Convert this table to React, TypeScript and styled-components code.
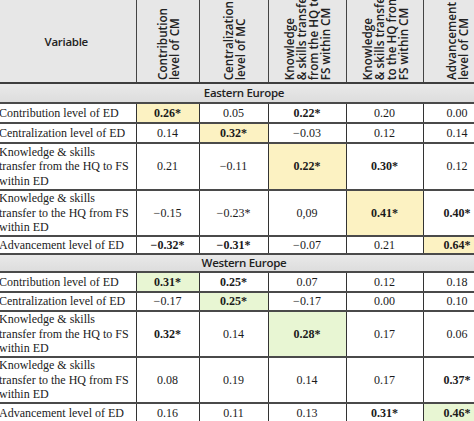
import React from 'react';
import styled, { createGlobalStyle } from 'styled-components';

type Tint = 'yellow' | 'green';

interface Value {
    v: string;
    b?: boolean;
    hl?: Tint;
}

interface DataRow {
    label: React.ReactNode;
    h: number;
    values: Value[];
}

interface Block {
    title: string;
    h: number;
    rows: DataRow[];
}

const columns = [
    ['Contribution', 'level of CM'],
    ['Centralization', 'level of MC'],
    ['Knowledge', '& skills transfer', 'from the HQ to', 'FS within CM'],
    ['Knowledge', '& skills transfer', 'to the HQ from', 'FS within CM'],
    ['Advancement', 'level of CM'],
];

const colWidths = [139, 63, 69, 78, 77, 68];

const fromHQ = (
    <>
        Knowledge &amp; skills
        <br />
        transfer from the HQ to FS
        <br />
        within ED
    </>
);

const toHQ = (
    <>
        Knowledge &amp; skills
        <br />
        transfer to the HQ from FS
        <br />
        within ED
    </>
);

const blocks: Block[] = [
    {
        title: 'Eastern Europe',
        h: 20,
        rows: [
            {
                label: 'Contribution level of ED',
                h: 20,
                values: [{ v: '0.26*', b: true, hl: 'yellow' }, { v: '0.05' }, { v: '0.22*', b: true }, { v: '0.20' }, { v: '0.00' }],
            },
            {
                label: 'Centralization level of ED',
                h: 20,
                values: [{ v: '0.14' }, { v: '0.32*', b: true, hl: 'yellow' }, { v: '\u22120.03' }, { v: '0.12' }, { v: '0.14' }],
            },
            {
                label: fromHQ,
                h: 47,
                values: [{ v: '0.21' }, { v: '\u22120.11' }, { v: '0.22*', b: true, hl: 'yellow' }, { v: '0.30*', b: true }, { v: '0.12' }],
            },
            {
                label: toHQ,
                h: 46,
                values: [{ v: '\u22120.15' }, { v: '\u22120.23*' }, { v: '0,09' }, { v: '0.41*', b: true, hl: 'yellow' }, { v: '0.40*', b: true }],
            },
            {
                label: 'Advancement level of ED',
                h: 18,
                values: [{ v: '\u22120.32*', b: true }, { v: '\u22120.31*', b: true }, { v: '\u22120.07' }, { v: '0.21' }, { v: '0.64*', b: true, hl: 'yellow' }],
            },
        ],
    },
    {
        title: 'Western Europe',
        h: 18,
        rows: [
            {
                label: 'Contribution level of ED',
                h: 20,
                values: [{ v: '0.31*', b: true, hl: 'green' }, { v: '0.25*', b: true }, { v: '0.07' }, { v: '0.12' }, { v: '0.18' }],
            },
            {
                label: 'Centralization level of ED',
                h: 19,
                values: [{ v: '\u22120.17' }, { v: '0.25*', b: true, hl: 'green' }, { v: '\u22120.17' }, { v: '0.00' }, { v: '0.10' }],
            },
            {
                label: fromHQ,
                h: 46,
                values: [{ v: '0.32*', b: true }, { v: '0.14' }, { v: '0.28*', b: true, hl: 'green' }, { v: '0.17' }, { v: '0.06' }],
            },
            {
                label: toHQ,
                h: 46,
                values: [{ v: '0.08' }, { v: '0.19' }, { v: '0.14' }, { v: '0.17' }, { v: '0.37*', b: true }],
            },
            {
                label: 'Advancement level of ED',
                h: 20,
                values: [{ v: '0.16' }, { v: '0.11' }, { v: '0.13' }, { v: '0.31*', b: true }, { v: '0.46*', b: true, hl: 'green' }],
            },
        ],
    },
];

const App: React.FC = () => {
    return (
        <>
            <GlobalStyle />
            <Table>
                <colgroup>
                    {colWidths.map((w, i) => (
                        <col key={i} style={{ width: w }} />
                    ))}
                </colgroup>
                <thead>
                    <tr>
                        <VariableHead>Variable</VariableHead>
                        {columns.map((lines, i) => (
                            <HeadCell key={i}>
                                <HeadInner>
                                    <Rotated>
                                        {lines.map((l, j) => (
                                            <React.Fragment key={j}>
                                                {j > 0 && <br />}
                                                {l}
                                            </React.Fragment>
                                        ))}
                                    </Rotated>
                                </HeadInner>
                            </HeadCell>
                        ))}
                    </tr>
                </thead>
                {blocks.map((block) => (
                    <tbody key={block.title}>
                        <Row $h={block.h}>
                            <BandCell colSpan={6}>{block.title}</BandCell>
                        </Row>
                        {block.rows.map((row, i) => (
                            <Row key={i} $h={row.h}>
                                <VarCell>{row.label}</VarCell>
                                {row.values.map((val, j) => (
                                    <ValueCell key={j} $bold={val.b} $tint={val.hl}>
                                        {val.v}
                                    </ValueCell>
                                ))}
                            </Row>
                        ))}
                    </tbody>
                ))}
            </Table>
        </>
    );
};
export default App;

const GlobalStyle = createGlobalStyle`
    html, body {
        margin: 0;
        padding: 0;
        background: #fff;
        overflow: hidden;
    }
`;

const Table = styled.table`
    margin-left: -3px;
    width: 494px;
    border-collapse: collapse;
    table-layout: fixed;
    font-family: 'Liberation Serif', 'Times New Roman', serif;
    font-size: 12px;
    color: #1b1b1b;
`;

const HeadCell = styled.th`
    height: 82px;
    padding: 0;
    background: #e7e7e7;
    border-left: 1px solid #444;
    border-right: 1px solid #444;
    border-bottom: 2px solid #3e3e3e;
    font-family: 'Open Sans', sans-serif;
    font-weight: 600;
    font-size: 11.7px;
    color: #222;
    vertical-align: bottom;
`;

const VariableHead = styled(HeadCell)`
    vertical-align: middle;
    text-align: center;
    font-size: 11.5px;
    letter-spacing: -0.3px;
    border-left: none;
`;

const HeadInner = styled.div`
    height: 82px;
    display: flex;
    justify-content: center;
    align-items: flex-end;
`;

const Rotated = styled.div`
    flex-shrink: 0;
    writing-mode: vertical-rl;
    transform: rotate(180deg);
    white-space: nowrap;
    line-height: 12px;
    text-align: left;
    padding-top: 2px;
`;

const Row = styled.tr<{ $h: number }>`
    height: ${(p) => p.$h}px;
`;

const BandCell = styled.td`
    padding: 0;
    background: linear-gradient(#e9e9e9, #dddddd);
    border-top: 2px solid #4a4a4a;
    border-bottom: 2px solid #4a4a4a;
    font-family: 'Open Sans', sans-serif;
    font-weight: 600;
    font-size: 11.5px;
    letter-spacing: -0.3px;
    color: #222;
    text-align: center;
    vertical-align: middle;
    line-height: 14px;
`;

const VarCell = styled.td`
    padding: 0 0 0 2px;
    border-top: 2px solid #4a4a4a;
    border-bottom: 2px solid #4a4a4a;
    border-right: 1px solid #333;
    line-height: 14.5px;
    text-align: left;
    vertical-align: middle;
    white-space: nowrap;
`;

const tints: Record<Tint, string> = {
    yellow: '#fcf2c2',
    green: '#e8f6d3',
};

const ValueCell = styled.td<{ $bold?: boolean; $tint?: Tint }>`
    padding: 0;
    border-top: 2px solid #4a4a4a;
    border-bottom: 2px solid #4a4a4a;
    border-left: 1px solid #333;
    border-right: 1px solid #333;
    background: ${(p) => (p.$tint ? tints[p.$tint] : '#fff')};
    font-weight: ${(p) => (p.$bold ? 700 : 400)};
    text-align: center;
    vertical-align: middle;
    line-height: 14.5px;
`;
